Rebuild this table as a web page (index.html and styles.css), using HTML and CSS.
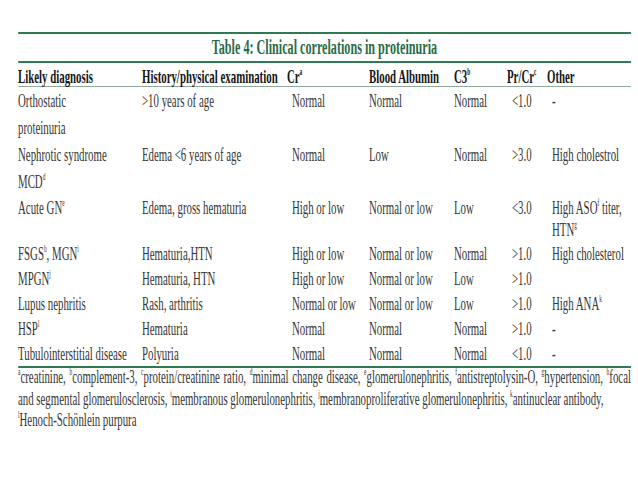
FILE: index.html
```html
<!DOCTYPE html>
<html lang="en">
<head>
<meta charset="utf-8">
<title>Table 4: Clinical correlations in proteinuria</title>
<link rel="stylesheet" href="styles.css">
</head>
<body>
<div class="page">
  <div class="sheet">
    <div class="rule"></div>
    <h1 class="title">Table 4: Clinical correlations in proteinuria</h1>
    <div class="rule"></div>

    <div class="row head">
      <div>Likely diagnosis</div>
      <div>History/physical examination</div>
      <div>Cr<sup>a</sup></div>
      <div>Blood Albumin</div>
      <div>C3<sup>b</sup></div>
      <div>Pr/Cr<sup>c</sup></div>
      <div>Other</div>
    </div>

    <div class="row tall">
      <div>Orthostatic<br>proteinuria</div>
      <div>&gt;10 years of age</div>
      <div class="ind">Normal</div>
      <div>Normal</div>
      <div>Normal</div>
      <div class="ind">&lt;1.0</div>
      <div class="ind">-</div>
    </div>

    <div class="row tall">
      <div>Nephrotic syndrome<br>MCD<sup>d</sup></div>
      <div>Edema &lt;6 years of age</div>
      <div class="ind">Normal</div>
      <div>Low</div>
      <div>Normal</div>
      <div class="ind">&gt;3.0</div>
      <div class="ind">High cholestrol</div>
    </div>

    <div class="row mid">
      <div>Acute GN<sup>e</sup></div>
      <div>Edema, gross hematuria</div>
      <div class="ind">High or low</div>
      <div>Normal or low</div>
      <div>Low</div>
      <div class="ind">&lt;3.0</div>
      <div class="ind">High ASO<sup>f</sup> titer,<br>HTN<sup>g</sup></div>
    </div>

    <div class="row">
      <div>FSGS<sup>h</sup>, MGN<sup>i</sup></div>
      <div>Hematuria,HTN</div>
      <div class="ind">High or low</div>
      <div>Normal or low</div>
      <div>Normal</div>
      <div class="ind">&gt;1.0</div>
      <div class="ind">High cholesterol</div>
    </div>

    <div class="row">
      <div>MPGN<sup>j</sup></div>
      <div>Hematuria, HTN</div>
      <div class="ind">High or low</div>
      <div>Normal or low</div>
      <div>Low</div>
      <div class="ind">&gt;1.0</div>
      <div class="ind"></div>
    </div>

    <div class="row">
      <div>Lupus nephritis</div>
      <div>Rash, arthritis</div>
      <div class="ind">Normal or low</div>
      <div>Normal or low</div>
      <div>Low</div>
      <div class="ind">&gt;1.0</div>
      <div class="ind">High ANA<sup>k</sup></div>
    </div>

    <div class="row">
      <div>HSP<sup>l</sup></div>
      <div>Hematuria</div>
      <div class="ind">Normal</div>
      <div>Normal</div>
      <div>Normal</div>
      <div class="ind">&gt;1.0</div>
      <div class="ind">-</div>
    </div>

    <div class="row">
      <div>Tubulointerstitial disease</div>
      <div>Polyuria</div>
      <div class="ind">Normal</div>
      <div>Normal</div>
      <div>Normal</div>
      <div class="ind">&lt;1.0</div>
      <div class="ind">-</div>
    </div>

    <div class="rule"></div>

    <div class="notes">
      <p class="note-line justify"><sup>a</sup>creatinine, <sup>b</sup>complement-3, <sup>c</sup>protein/creatinine ratio, <sup>d</sup>minimal change disease, <sup>e</sup>glomerulonephritis, <sup>f</sup>antistreptolysin-O, <sup>g</sup>hypertension, <sup>h</sup>focal</p>
      <p class="note-line">and segmental glomerulosclerosis, <sup>i</sup>membranous glomerulonephritis, <sup>j</sup>membranoproliferative glomerulonephritis, <sup>k</sup>antinuclear antibody,</p>
      <p class="note-line"><sup>l</sup>Henoch-Schönlein purpura</p>
    </div>
  </div>
</div>
</body>
</html>
```

FILE: styles.css
```css
html, body {
  margin: 0;
  padding: 0;
  background: #ffffff;
  overflow: hidden;
}

.page {
  width: 1119px;
  padding: 32px 0 0 31.6px;
  box-sizing: border-box;
  transform: scaleX(0.57);
  transform-origin: 0 0;
  font-family: "Liberation Serif", "Times New Roman", serif;
  color: #363636;
}

.sheet {
  width: 1075.4px;
}

.rule {
  height: 2px;
  background: #2f7a52;
}

.title {
  margin: 0;
  font-size: 21.3px;
  line-height: 27px;
  font-weight: bold;
  text-align: center;
  color: #2c6b49;
}

.row {
  display: grid;
  grid-template-columns: 217.5px 254.4px 143.9px 149.1px 93px 70.2px 147.4px;
  font-size: 19px;
  line-height: 25px;
  white-space: nowrap;
}

.head {
  font-weight: bold;
  color: #161616;
  padding-top: 4px;
  line-height: 19px;
  border-bottom: 1px solid #8ea99b;
}

.tall {
  line-height: 27px;
}

.mid {
  padding-top: 2px;
  line-height: 22px;
}

.ind {
  padding-left: 8.8px;
}

sup {
  font-size: 0.5em;
  line-height: 0;
  vertical-align: 0.8em;
}

.notes {
  font-size: 19px;
  line-height: 21.5px;
  margin-top: -2px;
  color: #363636;
}

.note-line {
  margin: 0;
  white-space: nowrap;
}

.justify {
  text-align: justify;
  text-align-last: justify;
}
```
